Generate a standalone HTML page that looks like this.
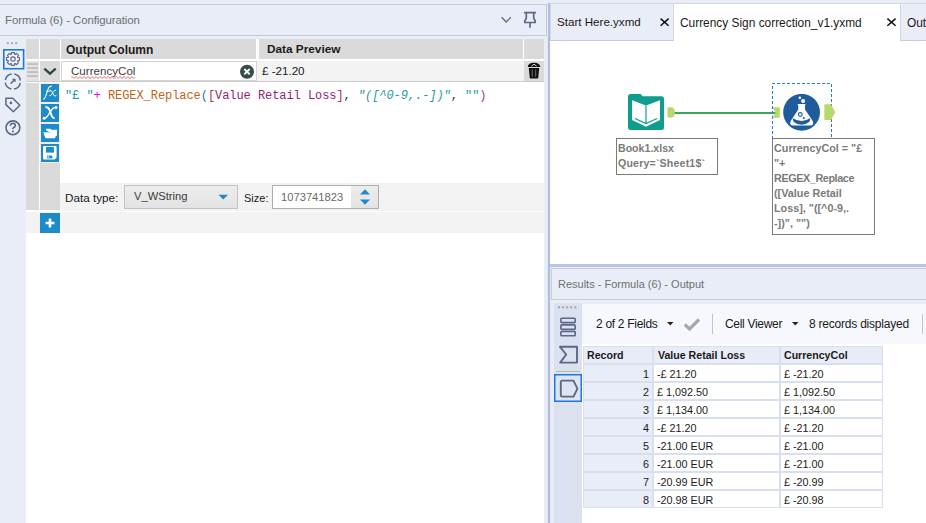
<!DOCTYPE html>
<html><head><meta charset="utf-8">
<style>
*{box-sizing:border-box;margin:0;padding:0}
html,body{width:926px;height:523px;overflow:hidden;background:#e9edf7;font-family:"Liberation Sans",sans-serif;font-size:12px;color:#1a1a1a}
.a{position:absolute}
.t{position:absolute;white-space:nowrap;line-height:1}
.mono{font-family:"Liberation Mono",monospace}
</style></head><body>
<!-- ===== CONFIG PANEL ===== -->
<div class="a" style="left:0;top:4px;width:547px;height:32px;border:1px solid #c6c9d1;border-left:none;background:#e9edf7"></div>
<div class="t" style="left:5px;top:15px;font-size:11.4px;letter-spacing:-0.07px;color:#6e6e6e">Formula (6) - Configuration</div>
<svg class="a" style="left:500px;top:15px" width="13" height="10" viewBox="0 0 13 10"><path d="M1.6 2.3 L6.2 7 L10.8 2.3" fill="none" stroke="#5e6a85" stroke-width="1.3"/></svg>
<svg class="a" style="left:522px;top:11px" width="16" height="18" viewBox="0 0 16 18"><path d="M2,1.7 H14 M4.3,1.7 V7.2 L2.8,10 V11.5 H13.2 V10 L11.7,7.2 V1.7 M8,12 V16.7" fill="none" stroke="#5e6a85" stroke-width="1.7" stroke-linejoin="round"/></svg>

<!-- left sidebar icons -->
<svg class="a" style="left:0;top:36px" width="26" height="110" viewBox="0 0 26 110">
  <rect x="6.8" y="6.2" width="2" height="2" fill="#a3a9b6"/><rect x="11" y="6.2" width="2" height="2" fill="#a3a9b6"/><rect x="15.2" y="6.2" width="2" height="2" fill="#a3a9b6"/>
  <rect x="3.8" y="13.8" width="19.8" height="18.9" fill="#eef1f9" stroke="#1a78df" stroke-width="1.6"/>
  <g transform="translate(13,23)" fill="none" stroke="#5b6987" stroke-width="1.15" stroke-linejoin="round">
    <path d="M-1.73,-4.59 L-1.44,-6.44 L1.44,-6.44 L1.73,-4.59 L2.02,-4.46 L3.54,-5.57 L5.57,-3.54 L4.46,-2.02 L4.59,-1.73 L6.44,-1.44 L6.44,1.44 L4.59,1.73 L4.46,2.02 L5.57,3.54 L3.54,5.57 L2.02,4.46 L1.73,4.59 L1.44,6.44 L-1.44,6.44 L-1.73,4.59 L-2.02,4.46 L-3.54,5.57 L-5.57,3.54 L-4.46,2.02 L-4.59,1.73 L-6.44,1.44 L-6.44,-1.44 L-4.59,-1.73 L-4.46,-2.02 L-5.57,-3.54 L-3.54,-5.57 L-2.02,-4.46 Z"/>
    <circle r="2.2"/>
  </g>
  <g transform="translate(12.8,45.5)" fill="none" stroke="#5b6987" stroke-width="1.5">
    <circle r="7.6" stroke-dasharray="9.2 2.74" stroke-dashoffset="10.57"/>
    <path d="M-2.2,2.2 L1.6,-1.6"/>
    <path d="M-0.2,-2.4 H2.4 V0.2 Z" fill="#5b6987" stroke-width="0.8" stroke-linejoin="round"/>
  </g>
  <path d="M5.9,62.2 H12.8 L19.8,69.3 L13.3,75.8 L5.9,68.6 Z" fill="none" stroke="#5b6987" stroke-width="1.5" stroke-linejoin="round"/>
  <circle cx="10.9" cy="66.9" r="1.3" fill="#5b6987"/>
  <circle cx="12.9" cy="91.8" r="6.9" fill="none" stroke="#5b6987" stroke-width="1.6"/>
  <path d="M10.4,89.8 Q10.6,87.3 13,87.3 Q15.4,87.4 15.3,89.6 Q15.2,91 13.4,91.8 L12.9,92.3 V93.3" fill="none" stroke="#5b6987" stroke-width="1.6"/>
  <circle cx="12.9" cy="95.6" r="1" fill="#5b6987"/>
</svg>

<!-- grid area white -->
<div class="a" style="left:26px;top:39px;width:518px;height:484px;background:#fff"></div>
<!-- col1 -->
<div class="a" style="left:26px;top:39px;width:13px;height:20px;background:#dadada"></div>
<div class="a" style="left:26px;top:83px;width:13px;height:126.5px;background:#dadada"></div>
<!-- col2 -->
<div class="a" style="left:40px;top:39px;width:20px;height:20px;background:#dadada"></div>
<div class="a" style="left:40px;top:61px;width:20px;height:19.5px;background:#dadada"></div>
<div class="a" style="left:40px;top:163px;width:20px;height:46.5px;background:#dadada"></div>
<div class="a" style="left:40px;top:83px;width:20px;height:80px;background:#f2ebe7"></div>
<!-- header cells -->
<div class="a" style="left:61px;top:39px;width:195px;height:20px;background:#dadada"></div>
<div class="a" style="left:259px;top:39px;width:264px;height:20px;background:#dadada"></div>
<div class="a" style="left:524px;top:39px;width:20px;height:20px;background:#dadada"></div>
<div class="t" style="left:66px;top:44px;font-weight:bold;font-size:12px">Output Column</div>
<div class="t" style="left:267px;top:44px;font-weight:bold;font-size:11.8px">Data Preview</div>
<!-- row 1 -->
<div class="a" style="left:26px;top:61px;width:13px;height:19.5px;background:#e3e3e3"></div>
<svg class="a" style="left:26px;top:61px" width="13" height="20"><g fill="#bcbcbc"><rect x="1.2" y="2.2" width="10.8" height="1.7"/><rect x="1.2" y="6.2" width="10.8" height="1.7"/><rect x="1.2" y="10.2" width="10.8" height="1.7"/><rect x="1.2" y="14.2" width="10.8" height="1.7"/></g></svg>
<svg class="a" style="left:40px;top:61px" width="20" height="20"><path d="M4.3,7.6 L10,12.6 L15.7,7.6" fill="none" stroke="#2c4646" stroke-width="2.3"/></svg>
<div class="a" style="left:61px;top:61px;width:196px;height:20px;background:#fff;border:1px solid #d4d4d4"></div>
<div class="t" style="left:71px;top:64.5px;font-size:11.6px;color:#3c3c3c">CurrencyCol</div>
<svg class="a" style="left:71px;top:75px" width="65" height="4"><path d="M0,2.5 Q1,0.5 2,2.5 T4,2.5 T6,2.5 T8,2.5 T10,2.5 T12,2.5 T14,2.5 T16,2.5 T18,2.5 T20,2.5 T22,2.5 T24,2.5 T26,2.5 T28,2.5 T30,2.5 T32,2.5 T34,2.5 T36,2.5 T38,2.5 T40,2.5 T42,2.5 T44,2.5 T46,2.5 T48,2.5 T50,2.5 T52,2.5 T54,2.5 T56,2.5 T58,2.5 T60,2.5 T62,2.5 T64,2.5" fill="none" stroke="#f03030" stroke-width="0.8"/></svg>
<svg class="a" style="left:239px;top:64px" width="16" height="16"><circle cx="8" cy="7.7" r="7" fill="#344c4c"/><path d="M5.3,5 L10.7,10.4 M10.7,5 L5.3,10.4" stroke="#fff" stroke-width="1.8"/></svg>
<div class="a" style="left:257px;top:61px;width:267px;height:20px;background:#f3f3f3"></div>
<div class="t" style="left:262px;top:65px;font-size:11.6px;color:#1a1a1a">£ -21.20</div>
<div class="a" style="left:524px;top:61px;width:20px;height:20px;background:#dadada"></div>
<svg class="a" style="left:527px;top:62px" width="14" height="17" viewBox="0 0 14 17"><path d="M0.8,5 Q0.8,1 7,0.8 Q13.2,1 13.2,5 Z" fill="#111"/><path d="M4.4,4.1 L7,2.2 L9.6,4.1" fill="none" stroke="#f0f0f0" stroke-width="0.9"/><path d="M1.8,6 H12.2 L11.3,15.4 Q11.1,16.6 9.9,16.6 H4.1 Q2.9,16.6 2.7,15.4 Z" fill="#111"/><path d="M5.3,7.6 V14.8 M8.7,7.6 V14.8" stroke="#7a7a7a" stroke-width="0.9"/></svg>
<div class="a" style="left:26px;top:80.5px;width:518px;height:1.5px;background:#cdcdcd"></div>

<!-- blue buttons -->
<div class="a" style="left:41px;top:84px;width:18px;height:18px;background:#1c8bc7"></div>
<div class="a" style="left:41px;top:104px;width:18px;height:18px;background:#1c8bc7"></div>
<div class="a" style="left:41px;top:124px;width:18px;height:18px;background:#1c8bc7"></div>
<div class="a" style="left:41px;top:144px;width:18px;height:18px;background:#1c8bc7"></div>
<svg class="a" style="left:41px;top:84px" width="18" height="18" viewBox="0 0 18 18"><path d="M2,15 Q3.6,15.4 4.6,12.4 L7.4,4.4 Q8.4,1.8 10.8,2.2" fill="none" stroke="#fff" stroke-width="1.1"/><path d="M5.2,7.2 H9.2" stroke="#fff" stroke-width="0.9"/><path d="M8.6,6.2 Q10,5.6 11.2,8 L13,11.6 Q13.8,12.6 15.4,11.4 M15.2,6.4 Q14,5.6 12.4,7.8 L10,11.2 Q9,12.4 8.4,11.6" fill="none" stroke="#fff" stroke-width="1"/></svg>
<svg class="a" style="left:41px;top:104px" width="18" height="18" viewBox="0 0 18 18"><path d="M4.4,3.4 Q7.2,2.6 8.6,6.2 L10.6,11.6 Q11.8,14.6 13.6,14" fill="none" stroke="#fff" stroke-width="2"/><path d="M15.4,3.2 Q12.8,2.8 10.4,6.2 L7,11.4 Q5,14.6 3,14.4" fill="none" stroke="#fff" stroke-width="1.4"/><circle cx="15" cy="3.6" r="1.5" fill="#fff"/><circle cx="3.2" cy="14.2" r="1.5" fill="#fff"/></svg>
<svg class="a" style="left:41px;top:124px" width="18" height="18" viewBox="0 0 18 18"><path d="M5,6.2 V4.8 H9.5 L10.3,5.8 H16 V12 Z" fill="#fff"/><path d="M2.2,8.2 H15.8 L14,14.2 H4.5 Z" fill="#fff"/><path d="M14.6,6.5 L16,7.2 L14.2,14" fill="#fff"/></svg>
<svg class="a" style="left:41px;top:144px" width="18" height="18" viewBox="0 0 18 18"><path d="M2,3 Q2,2 3,2 H14.6 Q15.6,2 15.6,3 V13.6 L13.6,15.6 H3 Q2,15.6 2,14.6 Z" fill="#fff"/><rect x="5" y="3" width="8" height="5.6" fill="#1c8bc7"/><rect x="6" y="11.6" width="5.4" height="2.8" fill="#1c8bc7"/><rect x="6.6" y="12.4" width="1.6" height="1.2" fill="#fff"/></svg>

<!-- expression -->
<div class="t mono" style="left:65px;top:90.3px;font-size:12px;letter-spacing:-0.06px;color:#333"><span style="color:#1f99a3">"£ "</span><span style="color:#f000f0">+</span> <span style="color:#bd6514">REGEX_Replace</span><span style="color:#2a72c0">(</span><span style="color:#b03050">[</span><span style="color:#951c70">Value Retail Loss</span><span style="color:#b03050">]</span>, <span style="color:#1f99a3;font-style:italic">"([^0-9,.-])"</span>, <span style="color:#1f99a3">""</span><span style="color:#8a3ad0">)</span></div>

<!-- data type row -->
<div class="a" style="left:60px;top:183px;width:484px;height:27.5px;background:#f3f3f3"></div>
<div class="t" style="left:65px;top:191.5px;font-size:11.7px;color:#1a1a1a">Data type:</div>
<div class="a" style="left:124px;top:185px;width:114px;height:24px;background:linear-gradient(#ededed,#e3e3e3);border:1px solid #c3c3c3"></div>
<div class="t" style="left:134px;top:191px;font-size:11.2px;color:#3a3a3a">V_WString</div>
<svg class="a" style="left:218px;top:194px" width="11" height="6"><path d="M0.5,0.8 H10 L5.25,5.5 Z" fill="#1c8ad0"/></svg>
<div class="t" style="left:244px;top:192.5px;font-size:11px;color:#1a1a1a">Size:</div>
<div class="a" style="left:272px;top:185px;width:107px;height:24px;background:#fff;border:1px solid #adadad"></div>
<div class="a" style="left:351px;top:186px;width:27px;height:22px;background:linear-gradient(#eeeeee 0,#e6e6e6 50%,#e9e9e9 50%,#e2e2e2 100%)"></div>
<div class="t" style="left:281px;top:192px;font-size:11.2px;color:#6a6a6a">1073741823</div>
<svg class="a" style="left:359px;top:188px" width="12" height="18"><path d="M1,6.4 L6,1.2 L11,6.4 Z M1,11.6 H11 L6,16.8 Z" fill="#1c8ad0"/></svg>

<!-- + row -->
<div class="a" style="left:26px;top:212px;width:518px;height:21px;background:#f3f3f3"></div>
<div class="a" style="left:40px;top:213px;width:20px;height:20px;background:#1c8bc7"></div>
<svg class="a" style="left:40px;top:213px" width="20" height="20"><path d="M10,5.6 V14.4 M5.6,10 H14.4" stroke="#fff" stroke-width="2.6"/></svg>


<!-- ===== TABS ===== -->
<div class="a" style="left:550px;top:3px;width:124px;height:38px;background:#e9edf7;border:1px solid #d2d8e6;border-top-color:#d6d6d8;border-bottom:1px solid #c3cde6"></div>
<div class="t" style="left:557px;top:16px;font-size:11.6px;color:#1a1a1a">Start Here.yxmd</div>
<svg class="a" style="left:659px;top:17px" width="11" height="10"><path d="M1.6,1.6 L9.6,8.8 M9.6,1.6 L1.6,8.8" stroke="#111" stroke-width="1.5"/></svg>
<div class="a" style="left:674px;top:3px;width:226px;height:38px;background:#fff;border-top:1px solid #d6d6d8"></div>
<div class="t" style="left:680px;top:18px;font-size:11.9px;color:#1a1a1a">Currency Sign correction_v1.yxmd</div>
<svg class="a" style="left:886px;top:17px" width="11" height="10"><path d="M1.4,1.6 L9.6,8.8 M9.6,1.6 L1.4,8.8" stroke="#111" stroke-width="1.5"/></svg>
<div class="a" style="left:900px;top:3px;width:30px;height:38px;background:#e9edf7;border:1px solid #d2d8e6;border-top-color:#d6d6d8;border-bottom:1px solid #c3cde6"></div>
<div class="t" style="left:907px;top:18px;font-size:11.9px;color:#1a1a1a">Out</div>
<!-- splitter vertical -->
<div class="a" style="left:547px;top:36px;width:1px;height:487px;background:#e4e6ee"></div>
<div class="a" style="left:550px;top:264px;width:1px;height:259px;background:#e4e6ee"></div>
<div class="a" style="left:548px;top:3px;width:2px;height:520px;background:#b0bedd"></div>

<!-- ===== CANVAS ===== -->
<div class="a" style="left:550px;top:41px;width:376px;height:223px;background:#fff"></div>
<!-- connection line -->
<div class="a" style="left:674px;top:111.5px;width:102px;height:2px;background:#3aa65a"></div>
<!-- input tool -->
<svg class="a" style="left:627px;top:93px" width="38" height="38" viewBox="0 0 38 38">
  <path d="M1,3.5 Q1,1 3.5,1 H13 Q14.5,1 15,2.5 L15.5,3.2 H34.5 Q37,3.2 37,5.7 V34.5 Q37,37 34.5,37 H3.5 Q1,37 1,34.5 Z" fill="#0f9e8e"/>
  <path d="M5,7.2 L19,12.5 L33,7.2 V27 L19,33.8 L5,27 Z" fill="#fff"/>
  <path d="M19,12.5 V30" stroke="#0f9e8e" stroke-width="1.2"/>
  <path d="M8,25.5 L19,30.5 L30,25.5" fill="none" stroke="#0f9e8e" stroke-width="1.2"/>
</svg>
<!-- output anchor of input -->
<svg class="a" style="left:667px;top:107px" width="9" height="11"><path d="M0.5,0.3 H4.8 Q7.8,0.8 7.8,5.4 Q7.8,10 4.8,10.5 H0.5 Z" fill="#b7d96b"/></svg>
<!-- selection dashed -->
<svg class="a" style="left:772px;top:83px" width="60" height="56"><path d="M0.5,56 V0.5 H59.5 V56" fill="none" stroke="#2179d8" stroke-width="1" stroke-dasharray="3 2"/></svg>
<!-- input anchor formula -->
<svg class="a" style="left:772px;top:107px" width="9" height="12"><path d="M0.5,0.3 H7.8 V10.8 H0.5 L3.5,5.5 Z" fill="#b7d96b"/></svg>
<!-- formula circle -->
<svg class="a" style="left:783px;top:94px" width="38" height="38" viewBox="0 0 38 38">
  <circle cx="18.6" cy="18.3" r="18.4" fill="#1e5c9c"/>
  <circle cx="16.8" cy="3.7" r="1.3" fill="#fff"/>
  <circle cx="20.1" cy="6.9" r="2" fill="#fff"/>
  <path d="M14.4,10 H22.7 L22,11.4 V15.6 L29.6,26.8 Q31.8,31.6 27,31.6 H10.4 Q5.6,31.6 7.8,26.8 L15.3,15.6 V11.4 Z" fill="#fff"/>
  <path d="M9.8,24.2 Q18.5,29.6 27.2,24.2 Q27.6,26.8 26.2,27.9 Q18.5,33.6 10.8,27.9 Q9.4,26.8 9.8,24.2 Z" fill="#1e5c9c"/>
  <circle cx="17.3" cy="20.5" r="1.9" fill="none" stroke="#1e5c9c" stroke-width="1.1"/>
  <circle cx="20.8" cy="24" r="1.05" fill="#1e5c9c"/>
</svg>
<!-- output anchor formula -->
<svg class="a" style="left:824px;top:104px" width="12" height="17"><path d="M0.3,0.3 H7 L11.2,8.2 L7,16 H0.3 Z" fill="#b7d96b"/></svg>
<!-- annotations -->
<div class="a" style="left:616px;top:138px;width:102px;height:37px;background:#fff;border:1px solid #7a7a7a"></div>
<div class="t" style="left:618px;top:141px;font-weight:bold;font-size:10.6px;color:#7a7a7a;line-height:15px">Book1.xlsx<br><span style="letter-spacing:0.18px">Query=`Sheet1$`</span></div>
<div class="a" style="left:772px;top:138px;width:103px;height:97px;background:#fff;border:1px solid #7a7a7a"></div>
<div class="t" style="left:774px;top:141px;font-weight:bold;font-size:10.8px;color:#7a7a7a;line-height:15px">CurrencyCol = "£<br>"+<br><span style="letter-spacing:-0.4px">REGEX_Replace</span><br>([Value Retail<br>Loss], "([^0-9,.<br>-])", "")</div>

<!-- ===== RESULTS ===== -->
<div class="a" style="left:550px;top:264px;width:376px;height:3px;background:#b8c5e3"></div>
<div class="a" style="left:551px;top:268px;width:380px;height:32px;border:1px solid #c9ccd3;background:#e9edf7"></div>
<div class="t" style="left:558px;top:279px;font-size:11px;color:#707070">Results - Formula (6) - Output</div>
<!-- toolbar -->
<div class="a" style="left:582px;top:304px;width:344px;height:40px;background:#f6f8fd"></div>
<div class="t" style="left:596px;top:318px;font-size:12px;letter-spacing:-0.3px;color:#1a1a1a">2 of 2 Fields</div>
<svg class="a" style="left:667px;top:322px" width="7" height="4"><path d="M0,0 H6.5 L3.25,3.5 Z" fill="#222"/></svg>
<svg class="a" style="left:683px;top:317px" width="18" height="15"><path d="M1.8,7.5 L6.5,12 L16,2.5" fill="none" stroke="#a8a8a8" stroke-width="3.2"/></svg>
<div class="a" style="left:712px;top:314px;width:1px;height:20px;background:#c4c4c4"></div>
<div class="t" style="left:725px;top:318px;font-size:12px;letter-spacing:-0.3px;color:#1a1a1a">Cell Viewer</div>
<svg class="a" style="left:792px;top:322px" width="7" height="4"><path d="M0,0 H6.5 L3.25,3.5 Z" fill="#222"/></svg>
<div class="t" style="left:809px;top:318px;font-size:12px;letter-spacing:-0.22px;color:#1a1a1a">8 records displayed</div>
<div class="a" style="left:922px;top:314px;width:1px;height:20px;background:#c4c4c4"></div>
<!-- left toolbar column -->
<div class="a" style="left:554px;top:303px;width:28px;height:220px;background:#dbe1ef"></div>
<!-- results grid -->
<div class="a" style="left:582px;top:344px;width:344px;height:179px;background:#fff"></div>
<div class="a" style="left:583px;top:346px;width:300px;height:162px;background:#d8dfef"></div>
<div class="a" style="left:584px;top:347px;width:68px;height:16px;background:#e8ecf6"></div>
<div class="a" style="left:654px;top:347px;width:125px;height:16px;background:#e8ecf6"></div>
<div class="a" style="left:781px;top:347px;width:101px;height:16px;background:#e8ecf6"></div>
<div class="t" style="left:587px;top:350px;font-weight:bold;font-size:10.6px;color:#1a1a1a">Record</div>
<div class="t" style="left:658px;top:350px;font-weight:bold;font-size:10.6px;color:#1a1a1a">Value Retail Loss</div>
<div class="t" style="left:784px;top:350px;font-weight:bold;font-size:10.6px;color:#1a1a1a">CurrencyCol</div>
<div class="a" style="left:584px;top:365px;width:68px;height:16px;background:#e9edf7"></div>
<div class="a" style="left:654px;top:365px;width:125px;height:16px;background:#fff"></div>
<div class="a" style="left:781px;top:365px;width:101px;height:16px;background:#fff"></div>
<div class="t" style="left:600px;width:49px;text-align:right;top:369px;font-size:10.8px;color:#1a1a1a">1</div>
<div class="t" style="left:657px;top:369px;font-size:10.8px;color:#1a1a1a">-£ 21.20</div>
<div class="t" style="left:784px;top:369px;font-size:10.8px;color:#1a1a1a">£ -21.20</div>
<div class="a" style="left:584px;top:383px;width:68px;height:16px;background:#e9edf7"></div>
<div class="a" style="left:654px;top:383px;width:125px;height:16px;background:#fff"></div>
<div class="a" style="left:781px;top:383px;width:101px;height:16px;background:#fff"></div>
<div class="t" style="left:600px;width:49px;text-align:right;top:387px;font-size:10.8px;color:#1a1a1a">2</div>
<div class="t" style="left:657px;top:387px;font-size:10.8px;color:#1a1a1a">£ 1,092.50</div>
<div class="t" style="left:784px;top:387px;font-size:10.8px;color:#1a1a1a">£ 1,092.50</div>
<div class="a" style="left:584px;top:401px;width:68px;height:16px;background:#e9edf7"></div>
<div class="a" style="left:654px;top:401px;width:125px;height:16px;background:#fff"></div>
<div class="a" style="left:781px;top:401px;width:101px;height:16px;background:#fff"></div>
<div class="t" style="left:600px;width:49px;text-align:right;top:405px;font-size:10.8px;color:#1a1a1a">3</div>
<div class="t" style="left:657px;top:405px;font-size:10.8px;color:#1a1a1a">£ 1,134.00</div>
<div class="t" style="left:784px;top:405px;font-size:10.8px;color:#1a1a1a">£ 1,134.00</div>
<div class="a" style="left:584px;top:419px;width:68px;height:16px;background:#e9edf7"></div>
<div class="a" style="left:654px;top:419px;width:125px;height:16px;background:#fff"></div>
<div class="a" style="left:781px;top:419px;width:101px;height:16px;background:#fff"></div>
<div class="t" style="left:600px;width:49px;text-align:right;top:423px;font-size:10.8px;color:#1a1a1a">4</div>
<div class="t" style="left:657px;top:423px;font-size:10.8px;color:#1a1a1a">-£ 21.20</div>
<div class="t" style="left:784px;top:423px;font-size:10.8px;color:#1a1a1a">£ -21.20</div>
<div class="a" style="left:584px;top:437px;width:68px;height:16px;background:#e9edf7"></div>
<div class="a" style="left:654px;top:437px;width:125px;height:16px;background:#fff"></div>
<div class="a" style="left:781px;top:437px;width:101px;height:16px;background:#fff"></div>
<div class="t" style="left:600px;width:49px;text-align:right;top:441px;font-size:10.8px;color:#1a1a1a">5</div>
<div class="t" style="left:657px;top:441px;font-size:10.8px;color:#1a1a1a">-21.00 EUR</div>
<div class="t" style="left:784px;top:441px;font-size:10.8px;color:#1a1a1a">£ -21.00</div>
<div class="a" style="left:584px;top:455px;width:68px;height:16px;background:#e9edf7"></div>
<div class="a" style="left:654px;top:455px;width:125px;height:16px;background:#fff"></div>
<div class="a" style="left:781px;top:455px;width:101px;height:16px;background:#fff"></div>
<div class="t" style="left:600px;width:49px;text-align:right;top:459px;font-size:10.8px;color:#1a1a1a">6</div>
<div class="t" style="left:657px;top:459px;font-size:10.8px;color:#1a1a1a">-21.00 EUR</div>
<div class="t" style="left:784px;top:459px;font-size:10.8px;color:#1a1a1a">£ -21.00</div>
<div class="a" style="left:584px;top:473px;width:68px;height:16px;background:#e9edf7"></div>
<div class="a" style="left:654px;top:473px;width:125px;height:16px;background:#fff"></div>
<div class="a" style="left:781px;top:473px;width:101px;height:16px;background:#fff"></div>
<div class="t" style="left:600px;width:49px;text-align:right;top:477px;font-size:10.8px;color:#1a1a1a">7</div>
<div class="t" style="left:657px;top:477px;font-size:10.8px;color:#1a1a1a">-20.99 EUR</div>
<div class="t" style="left:784px;top:477px;font-size:10.8px;color:#1a1a1a">£ -20.99</div>
<div class="a" style="left:584px;top:491px;width:68px;height:16px;background:#e9edf7"></div>
<div class="a" style="left:654px;top:491px;width:125px;height:16px;background:#fff"></div>
<div class="a" style="left:781px;top:491px;width:101px;height:16px;background:#fff"></div>
<div class="t" style="left:600px;width:49px;text-align:right;top:495px;font-size:10.8px;color:#1a1a1a">8</div>
<div class="t" style="left:657px;top:495px;font-size:10.8px;color:#1a1a1a">-20.98 EUR</div>
<div class="t" style="left:784px;top:495px;font-size:10.8px;color:#1a1a1a">£ -20.98</div>

<svg class="a" style="left:554px;top:303px" width="28" height="110" viewBox="0 0 28 110">
  <g fill="#a3a3ab"><rect x="4" y="3.3" width="2" height="2"/><rect x="8.1" y="3.3" width="2" height="2"/><rect x="12.2" y="3.3" width="2" height="2"/><rect x="16.2" y="3.3" width="2" height="2"/><rect x="20.3" y="3.3" width="2" height="2"/></g>
  <g fill="none" stroke="#5b6987" stroke-width="1.6">
    <rect x="6.9" y="15.3" width="14.3" height="4.3" rx="0.8"/>
    <rect x="6.9" y="21.9" width="14.3" height="4.3" rx="0.8"/>
    <rect x="6.9" y="28.4" width="14.3" height="4.3" rx="0.8"/>
    <path d="M6,43.8 H23 V59.6 H6.2 L12.2,51.5 Z" stroke-width="1.9" stroke-linejoin="round"/>
  </g>
  <rect x="2" y="68" width="24" height="1" fill="#bdb6ae"/>
  <rect x="0.75" y="71.75" width="26.5" height="26.5" fill="#dee4f1" stroke="#1a78df" stroke-width="1.5"/>
  <path d="M6.8,79 Q6.8,77.6 8.2,77.6 H19.5 L23.4,85.6 L19.5,93.6 H8.2 Q6.8,93.6 6.8,92.2 Z" fill="none" stroke="#5b6987" stroke-width="1.9" stroke-linejoin="round"/>
</svg>

</body></html>
